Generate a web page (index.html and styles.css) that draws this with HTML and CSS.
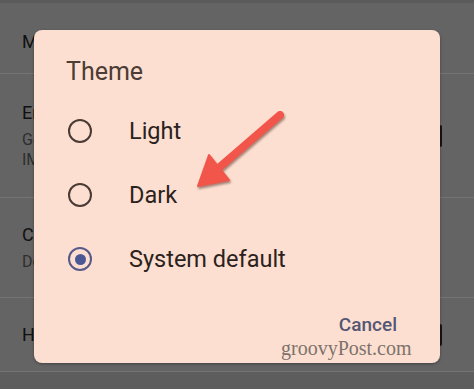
FILE: index.html
```html
<!DOCTYPE html>
<html lang="en">
<head>
    <meta charset="UTF-8">
    <meta name="viewport" content="width=device-width, initial-scale=1.0">
    <title>Theme</title>
    <link rel="stylesheet" href="styles.css">
</head>
<body>

    <!-- Settings list behind the dialog -->
    <div class="settings">
        <div class="row row-first">
            <div class="row-text">
                <div class="row-title">Manage</div>
            </div>
        </div>
        <div class="row row-tall">
            <div class="row-text">
                <div class="row-title">Enable</div>
                <div class="row-sub">Get alerts</div>
                <div class="row-sub">IMs</div>
            </div>
            <div class="toggle"></div>
        </div>
        <div class="row row-mid">
            <div class="row-text">
                <div class="row-title">Chat</div>
                <div class="row-sub">Default</div>
            </div>
        </div>
        <div class="row row-short">
            <div class="row-text">
                <div class="row-title">Help</div>
            </div>
            <div class="toggle"></div>
        </div>
        <div class="footer"></div>
    </div>

    <div class="dialog">
        <div class="dialog-title">Theme</div>
        <div class="option">
            <span class="radio"></span>
            <span class="option-label">Light</span>
        </div>
        <div class="option">
            <span class="radio"></span>
            <span class="option-label">Dark</span>
        </div>
        <div class="option">
            <span class="radio checked"></span>
            <span class="option-label">System default</span>
        </div>
        <div class="dialog-actions">
            <button class="text-btn">Cancel</button>
        </div>
    </div>

    <!-- Annotation arrow pointing at "Dark" -->
    <svg class="arrow" width="110" height="100" viewBox="0 0 110 100">
        <line x1="100" y1="15" x2="34" y2="72" stroke="#f2554a" stroke-width="8" stroke-linecap="round"/>
        <polygon points="18,86 29,55 49,80" fill="#f2554a" stroke="#f2554a" stroke-width="2" stroke-linejoin="round"/>
    </svg>

    <div class="watermark">groovyPost.com</div>

</body>
</html>
```

FILE: styles.css
```css
/* Page and background settings list */
body {
    margin: 0;
    width: 474px;
    height: 389px;
    overflow: hidden;
    position: relative;
    font-family: Roboto, "Liberation Sans", sans-serif;
    background-color: #646464;
}

.settings {
    border-top: 3px solid #5b5b5b;
}

.row {
    display: flex;
    align-items: center;
    padding: 0 32px 0 22px;
    border-bottom: 1px solid #747474;
    box-sizing: border-box;
}

.row-first {
    height: 71px;
    padding-top: 8px;
}

.row-tall {
    height: 124px;
}

.row-mid {
    height: 100px;
}

.row-short {
    height: 74px;
}

.row-text {
    margin-right: auto;
}

.row-title {
    font-size: 18px;
    line-height: 24px;
    color: #111;
    margin-bottom: 5px;
}

.row-text .row-title:last-child {
    margin-bottom: 0;
}

.row-sub {
    font-size: 16px;
    line-height: 20px;
    color: #2e2e2e;
}

.toggle {
    width: 40px;
    height: 22px;
    border-radius: 2px;
    background-color: #151515;
}

.footer {
    height: 20px;
    background-color: #5d5d5d;
}

/* Dialog */
.dialog {
    position: absolute;
    left: 34px;
    top: 30px;
    width: 406px;
    height: 333px;
    box-sizing: border-box;
    padding-top: 27px;
    border-radius: 8px;
    background-color: #fcdfd0;
    box-shadow: 0 1px 3px rgba(0, 0, 0, 0.35);
}

.dialog-title {
    padding-left: 32px;
    font-size: 25px;
    line-height: 30px;
    color: #4b3c35;
    margin-bottom: 12px;
}

.option {
    display: flex;
    align-items: center;
    height: 64px;
    padding-left: 34px;
}

.radio {
    width: 24px;
    height: 24px;
    box-sizing: border-box;
    border: 2.5px solid #4a3a34;
    border-radius: 50%;
    display: flex;
    align-items: center;
    justify-content: center;
}

.radio.checked {
    border-color: #565a8a;
}

.radio.checked::after {
    content: "";
    width: 11px;
    height: 11px;
    border-radius: 50%;
    background-color: #4a5896;
}

.option-label {
    margin-left: 37px;
    font-size: 23.5px;
    color: #2b2220;
}

.dialog-actions {
    display: flex;
    justify-content: flex-end;
    padding-right: 43px;
    margin-top: 22px;
}

.text-btn {
    padding: 0;
    border: none;
    background: none;
    font-family: Roboto, "Liberation Sans", sans-serif;
    font-size: 19px;
    line-height: 24px;
    font-weight: 500;
    color: #545675;
    cursor: pointer;
}

/* Overlays */
.arrow {
    position: absolute;
    left: 180px;
    top: 100px;
    filter: drop-shadow(1px 2px 1px rgba(60, 20, 10, 0.45));
}

.watermark {
    position: absolute;
    left: 281px;
    top: 338px;
    font-family: "Liberation Serif", serif;
    font-size: 20px;
    line-height: 20px;
    color: #7d726c;
}
```
